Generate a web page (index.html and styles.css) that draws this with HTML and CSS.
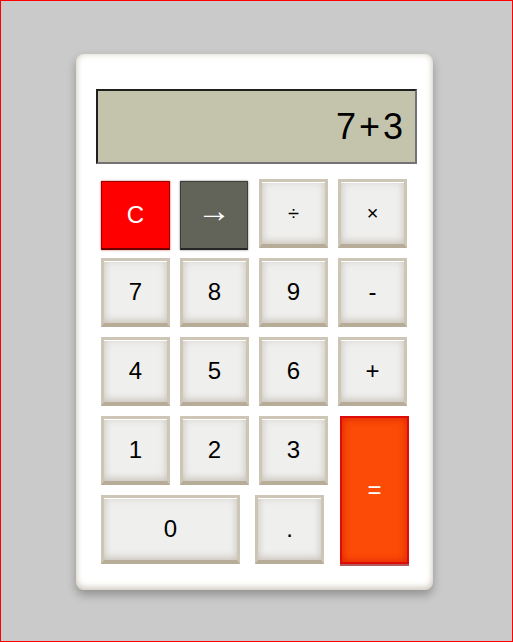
FILE: index.html
```html
<!DOCTYPE html>
<html>
<head>
<meta charset="utf-8">
<link rel="stylesheet" href="styles.css">
</head>
<body>
<div class="calc">
  <div class="display">7+3</div>
  <div class="keys">
    <div class="grid">
      <button class="key red">C</button>
      <button class="key dark">→</button>
      <button class="key op">÷</button>
      <button class="key op">×</button>
      <button class="key">7</button>
      <button class="key">8</button>
      <button class="key">9</button>
      <button class="key">-</button>
      <button class="key">4</button>
      <button class="key">5</button>
      <button class="key">6</button>
      <button class="key">+</button>
    </div>
    <div class="bottom">
      <div class="left">
        <div class="row">
          <button class="key">1</button>
          <button class="key">2</button>
          <button class="key">3</button>
        </div>
        <div class="row">
          <button class="key zero">0</button>
          <button class="key dot">.</button>
        </div>
      </div>
      <button class="key equals">=</button>
    </div>
  </div>
</div>
</body>
</html>
```
FILE: styles.css
```css
html, body {
  margin: 0;
  padding: 0;
}
body {
  box-sizing: border-box;
  width: 513px;
  height: 642px;
  border: 1px solid #ff0000;
  background: #cacaca;
  font-family: "Liberation Sans", Arial, sans-serif;
  overflow: hidden;
}
.calc {
  box-sizing: border-box;
  width: 357px;
  height: 536px;
  margin: 53px 0 0 75px;
  padding: 35px 16px 0 20px;
  background: #ffffff;
  border-radius: 8px;
  box-shadow: inset 0 -3px 6px rgba(160, 145, 120, 0.35),
              inset 0 0 6px rgba(170, 155, 130, 0.35),
              0 5px 10px rgba(0, 0, 0, 0.28);
}
.display {
  box-sizing: border-box;
  width: 321px;
  height: 75px;
  background: #c4c4ad;
  border: 2px solid #1f1f1f;
  border-right-color: #737373;
  border-bottom-color: #737373;
  display: flex;
  align-items: center;
  justify-content: flex-end;
  padding-right: 9px;
  font-size: 36px;
  letter-spacing: 3px;
  color: #000;
}
.keys {
  margin: 15px 0 0 5px;
}
.grid {
  display: grid;
  grid-template-columns: repeat(4, 69px);
  grid-auto-rows: 69px;
  gap: 10px;
}
.key {
  box-sizing: border-box;
  width: 69px;
  height: 69px;
  margin: 0;
  padding: 0;
  border: 3px solid #cdc6b6;
  border-bottom: 4px solid #b6ac98;
  background: #efefee;
  box-shadow: inset 0 1px 0 #ffffff,
              inset 0 -3px 6px rgba(150, 135, 110, 0.25),
              inset 0 0 8px rgba(150, 135, 110, 0.25);
  font-family: "Liberation Sans", Arial, sans-serif;
  font-size: 24px;
  color: #000;
  display: flex;
  align-items: center;
  justify-content: center;
}
.key.op {
  font-size: 20px;
}
.key.red {
  margin-top: 2px;
  background: #ff0000;
  color: #fff;
  border: 1px solid #a30000;
  border-bottom: 2px solid #6e0000;
  box-shadow: 0 0 2px rgba(150, 0, 0, 0.6);
}
.key.dark {
  margin-top: 2px;
  width: 68px;
  padding-bottom: 9px;
  background: #62645a;
  color: #fff;
  font-size: 34px;
  border: 1px solid #3d3d3a;
  border-bottom: 2px solid #262626;
  box-shadow: 0 0 2px rgba(0, 0, 0, 0.5);
}
.bottom {
  display: flex;
  margin-top: 10px;
}
.left {
  display: flex;
  flex-direction: column;
  gap: 10px;
}
.row {
  display: flex;
  gap: 10px;
}
.key.zero {
  width: 139px;
}
.key.dot {
  margin-left: 5px;
}
.key.equals {
  margin-left: 12px;
  height: 148px;
  background: #fb4b06;
  color: #fff;
  border: 2px solid #de0b0b;
  box-shadow: inset 0 0 9px rgba(200, 0, 0, 0.6),
              0 2px 0 #b25a5a;
}
```
